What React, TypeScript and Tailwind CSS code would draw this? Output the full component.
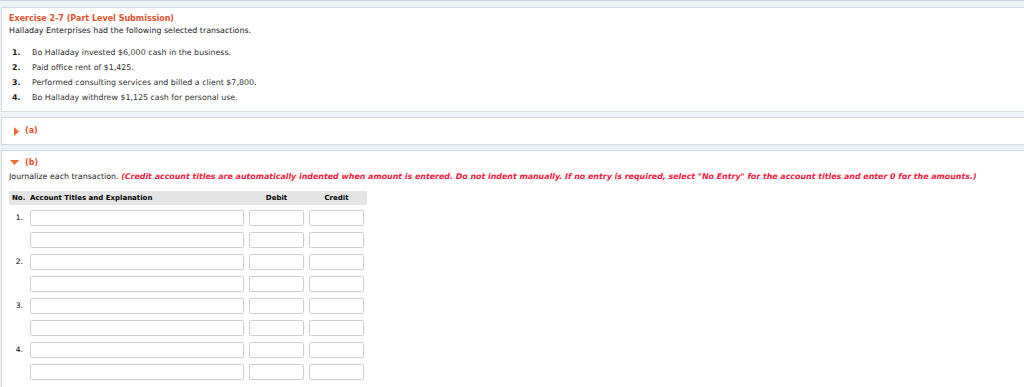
import React from 'react';

const transactions = [
  'Bo Halladay invested $6,000 cash in the business.',
  'Paid office rent of $1,425.',
  'Performed consulting services and billed a client $7,800.',
  'Bo Halladay withdrew $1,125 cash for personal use.',
];

const Panel: React.FC<{ className?: string; children: React.ReactNode }> = ({ className, children }) => (
  <div className={'bg-white border-l border-t border-b border-[#d3dbe4] pl-[7px] ' + (className ?? '')}>
    {children}
  </div>
);

const EntryRow: React.FC<{ no?: number }> = ({ no }) => (
  <div className="flex items-center h-[22px]">
    <div className="w-[21px] text-right pr-[7px] text-[7.5px] text-black">{no ? `${no}.` : ''}</div>
    <input className="w-[214px] h-[16px] border border-[#cfcfcf] rounded-[2px] bg-white" />
    <input className="ml-[5px] w-[55px] h-[16px] border border-[#cfcfcf] rounded-[2px] bg-white" />
    <input className="ml-[5px] w-[55px] h-[16px] border border-[#cfcfcf] rounded-[2px] bg-white" />
  </div>
);

export default function App() {
  return (
    <div
      className="w-[1024px] h-[387px] overflow-hidden bg-[#eef3f8] border-t border-[#cbd3dc] pt-[6px] pl-px text-[#1a1a1a]"
      style={{ fontFamily: '"DejaVu Sans", Verdana, sans-serif' }}
    >
      <Panel className="pt-[5px] pb-[6px]">
        <div className="text-[8px] leading-[12px] font-bold text-[#e2542c]">Exercise 2-7 (Part Level Submission)</div>
        <div className="text-[7.9px] leading-[12px]">Halladay Enterprises had the following selected transactions.</div>
        <ol className="mt-[8px]">
          {transactions.map((t, i) => (
            <li key={i} className="flex h-[15px] items-center text-[7.9px]">
              <span className="w-[23px] pl-[3px] font-bold">{i + 1}.</span>
              <span className="text-[#333]">{t}</span>
            </li>
          ))}
        </ol>
      </Panel>

      <Panel className="mt-[5px] h-[28px] flex items-center">
        <svg width="6" height="9" viewBox="0 0 6 9" className="ml-[5px]">
          <polygon points="0,0 5,4.5 0,9" fill="#f06a2a" />
        </svg>
        <span className="ml-[5px] text-[8px] font-bold text-[#e2542c]">(a)</span>
      </Panel>

      <Panel className="mt-[5px] pt-[6px] h-[300px]">
        <div className="flex items-center h-[12px]">
          <svg width="9" height="6" viewBox="0 0 9 6" className="ml-[1px]">
            <polygon points="0,0 9,0 4.5,5" fill="#f06a2a" />
          </svg>
          <span className="ml-[6px] text-[8px] font-bold text-[#e2542c]">(b)</span>
        </div>
        <div className="text-[7.9px] leading-[14px] mt-[1px] whitespace-nowrap">
          Journalize each transaction.{' '}
          <span className="font-bold italic text-[#f5203f]">
            (Credit account titles are automatically indented when amount is entered. Do not indent manually. If no entry is required, select "No Entry" for the account titles and enter 0 for the amounts.)
          </span>
        </div>
        <div className="mt-[7px] w-[358px] h-[14px] bg-[#e4e4e4] flex items-center text-[7px] font-bold text-black">
          <span className="pl-[3px] w-[21px]">No.</span>
          <span className="w-[214px]">Account Titles and Explanation</span>
          <span className="ml-[5px] w-[55px] text-center">Debit</span>
          <span className="ml-[5px] w-[55px] text-center">Credit</span>
        </div>
        <div className="mt-[2px]">
          {[1, 2, 3, 4].map((n) => (
            <React.Fragment key={n}>
              <EntryRow no={n} />
              <EntryRow />
            </React.Fragment>
          ))}
        </div>
      </Panel>
    </div>
  );
}
